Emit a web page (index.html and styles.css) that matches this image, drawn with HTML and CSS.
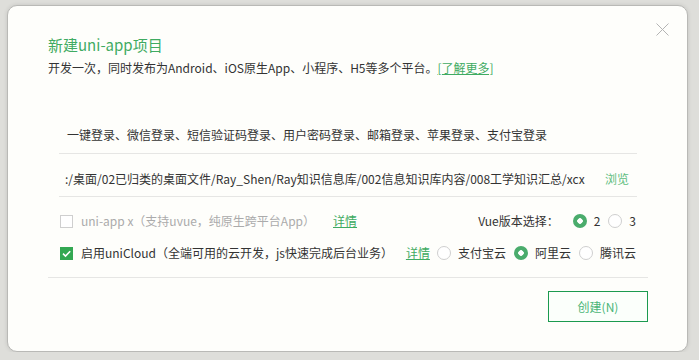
FILE: index.html
```html
<!DOCTYPE html>
<html lang="zh-CN"><head>
<meta charset="utf-8" />
<title>新建uni-app项目</title>
<link rel="stylesheet" href="styles.css">
</head><body>

<div class="dialog">
	<a class="close" href="#">
		<svg width="13" height="13" viewBox="0 0 13 13"><path d="M0.5 0.5L12.5 12.5M12.5 0.5L0.5 12.5" stroke="#b4b4b4" stroke-width="1" fill="none"/></svg>
	</a>

	<div class="head">
		<div class="title">新建uni-app项目</div>
		<div class="subtitle">开发一次，同时发布为Android、iOS原生App、小程序、H5等多个平台。<a class="link" href="#">[了解更多]</a></div>
	</div>

	<div class="form">
		<div class="field field_name">一键登录、微信登录、短信验证码登录、用户密码登录、邮箱登录、苹果登录、支付宝登录</div>
		<div class="field field_path">
			<span class="path">:/桌面/02已归类的桌面文件/Ray_Shen/Ray知识信息库/002信息知识库内容/008工学知识汇总/xcx</span>
			<a class="browse" href="#">浏览</a>
		</div>

		<div class="options">
			<div class="opt_row">
				<div class="opt_left">
					<span class="check"></span>
					<span class="muted">uni-app x（支持uvue，纯原生跨平台App）</span>
					<a class="link detail" href="#">详情</a>
				</div>
				<div class="opt_right">
					<span class="label">Vue版本选择：</span>
					<span class="radio on"></span><span class="rlabel">2</span>
					<span class="radio"></span><span class="rlabel">3</span>
				</div>
			</div>
			<div class="opt_row">
				<div class="opt_left">
					<span class="check on">
						<svg width="13" height="13" viewBox="0 0 13 13"><path d="M3 6.6L5.5 9L10.2 4.2" stroke="#fff" stroke-width="1.6" fill="none"/></svg>
					</span>
					<span>启用uniCloud（全端可用的云开发，js快速完成后台业务）</span>
					<a class="link detail" href="#">详情</a>
				</div>
				<div class="opt_right">
					<span class="radio"></span><span class="rlabel">支付宝云</span>
					<span class="radio on"></span><span class="rlabel">阿里云</span>
					<span class="radio"></span><span class="rlabel last">腾讯云</span>
				</div>
			</div>
		</div>
	</div>

	<div class="footer">
		<button class="btn_create">创建(N)</button>
	</div>
</div>

</body></html>
```

FILE: styles.css
```css
:root {
	--green        : #3fab62;
	--green-dark   : #1b9a4f;
	--text-color   : #333333;
	--muted-color  : #ababab;
	--line-color   : #e6e6e4;
	--dialog-bg    : #fefefb;
}
body {
	margin           : 0;
	background-color : #dededa;
	font-family      : "Noto Sans CJK SC", "Liberation Sans", sans-serif;
	font-size        : 12px;
	color            : var(--text-color);
	overflow         : hidden;
}
a {
	color : var(--green);
}
.dialog {
	position         : relative;
	box-sizing       : border-box;
	width            : 681px;
	height           : 347px;
	margin           : 5px 0 0 7px;
	padding          : 29px 39px 0 40px;
	background-color : var(--dialog-bg);
	border           : 1px solid #b9b9b6;
	border-radius    : 10px;
	box-shadow       : 0 0 4px rgba(0,0,0,0.12);
}
.close {
	position : absolute;
	top      : 17px;
	right    : 18px;
	display  : block;
	width    : 13px;
	height   : 13px;
}
.close svg {
	display : block;
}
.title {
	font-size   : 15px;
	line-height : 20px;
	color       : var(--green);
}
.subtitle {
	margin-top  : 3px;
	line-height : 20px;
}
.link {
	text-decoration : underline;
}
.form {
	margin : 39px 11px 0 11px;
}
.field {
	line-height   : 20px;
	border-bottom : 1px solid var(--line-color);
	white-space   : nowrap;
}
.field_name {
	padding : 8px 0 8px 8px;
}
.field_path {
	display         : flex;
	justify-content : space-between;
	padding         : 15px 8px 7px 6px;
}
.browse {
	color           : #5dbd7d;
	text-decoration : none;
}
.options {
	padding : 14px 0 14px 1px;
	border-bottom : 1px solid var(--line-color);
	margin  : 0 -11px;
	padding-left  : 12px;
	padding-right : 11px;
}
.opt_row {
	display         : flex;
	justify-content : space-between;
	align-items     : center;
	line-height     : 20px;
	white-space     : nowrap;
}
.opt_row + .opt_row {
	margin-top : 12px;
}
.opt_left, .opt_right {
	display     : flex;
	align-items : center;
}
.check {
	box-sizing       : border-box;
	width            : 13px;
	height           : 13px;
	margin-right     : 8px;
	border           : 1px solid #cfcfcf;
	background-color : #fff;
}
.check.on {
	border           : none;
	background-color : #33a852;
}
.check svg {
	display : block;
}
.muted {
	color : var(--muted-color);
}
.detail {
	margin-left : 13px;
}
.opt_row:first-child .detail {
	margin-left : 18px;
}
.label {
	margin-right : 14px;
}
.radio {
	box-sizing    : border-box;
	width         : 14px;
	height        : 14px;
	margin-right  : 7px;
	border        : 1px solid #cfcfcf;
	border-radius : 50%;
	background    : #fff;
}
.radio.on {
	border     : none;
	background : radial-gradient(circle, #fff 0 2.5px, #4aac6c 3px);
}
.rlabel {
	margin-right : 8px;
}
.opt_right .rlabel:last-child {
	margin-right : 1px;
}
.footer {
	display         : flex;
	justify-content : flex-end;
	margin-top      : 13px;
}
.btn_create {
	box-sizing       : border-box;
	width            : 100px;
	height           : 31px;
	border           : 1px solid var(--green-dark);
	background-color : #fbfffb;
	color            : #4ab577;
	font-family      : "Noto Sans CJK SC", "Liberation Sans", sans-serif;
	font-size        : 12px;
}
```
